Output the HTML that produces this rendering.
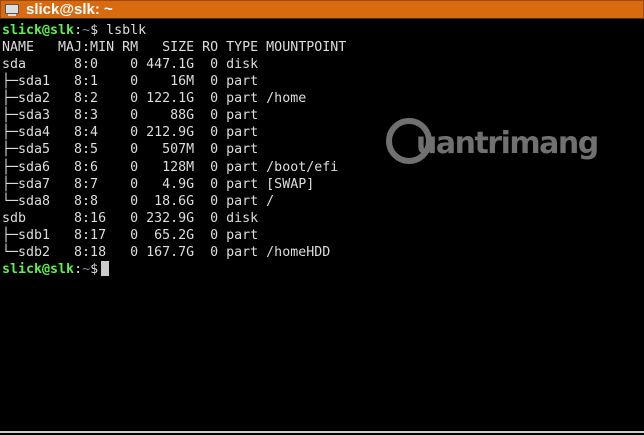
<!DOCTYPE html><html><head><style>
body{margin:0;width:644px;height:435px;background:#000;overflow:hidden;position:relative}
#t{position:absolute;left:0;top:0;width:642px;height:17px;background:#d86a10;border:1px solid #a04a00;border-bottom:1px solid #333}
#t span{position:absolute;left:25px;top:0;font:bold 15px "Liberation Sans",sans-serif;color:#fff;line-height:17px}
#t i{position:absolute;left:4px;top:3px;width:12px;height:8px;background:#ddd;border:1px solid #555}
#t b{position:absolute;left:7px;top:13px;width:8px;height:2px;background:#ddd}
pre{position:absolute;left:2px;top:22px;margin:0;font:13.3px "DejaVu Sans Mono",monospace;line-height:17.07px;color:#ddd}
.g{color:#5df04a;font-weight:bold}.b{color:#7a8fb0}
.c{display:inline-block;width:8px;height:15px;background:#ccc;vertical-align:-3px;margin-left:3px}
#bl{position:absolute;left:0;top:431px;width:644px;height:2px;background:#ccc}
#wm{position:absolute;left:416px;top:126px;font:bold 30px "DejaVu Sans",sans-serif;color:#707070;letter-spacing:-1.5px}
#o{position:absolute;left:386px;top:118px;width:34px;height:34px;border:6px solid #707070;border-radius:50%}
</style></head><body>
<div id="t"><i></i><b></b><span>slick@slk: ~</span></div>
<pre><span class="g">slick@slk</span>:<span class="b">~</span>$ lsblk
NAME   MAJ:MIN RM   SIZE RO TYPE MOUNTPOINT
sda      8:0    0 447.1G  0 disk 
├─sda1   8:1    0    16M  0 part 
├─sda2   8:2    0 122.1G  0 part /home
├─sda3   8:3    0    88G  0 part 
├─sda4   8:4    0 212.9G  0 part 
├─sda5   8:5    0   507M  0 part 
├─sda6   8:6    0   128M  0 part /boot/efi
├─sda7   8:7    0   4.9G  0 part [SWAP]
└─sda8   8:8    0  18.6G  0 part /
sdb      8:16   0 232.9G  0 disk 
├─sdb1   8:17   0  65.2G  0 part 
└─sdb2   8:18   0 167.7G  0 part /homeHDD
<span class="g">slick@slk</span>:<span class="b">~</span>$<span class="c"></span></pre>
<div id="o"></div><div id="wm">uantrimang</div>
<div id="bl"></div>
</body></html>
